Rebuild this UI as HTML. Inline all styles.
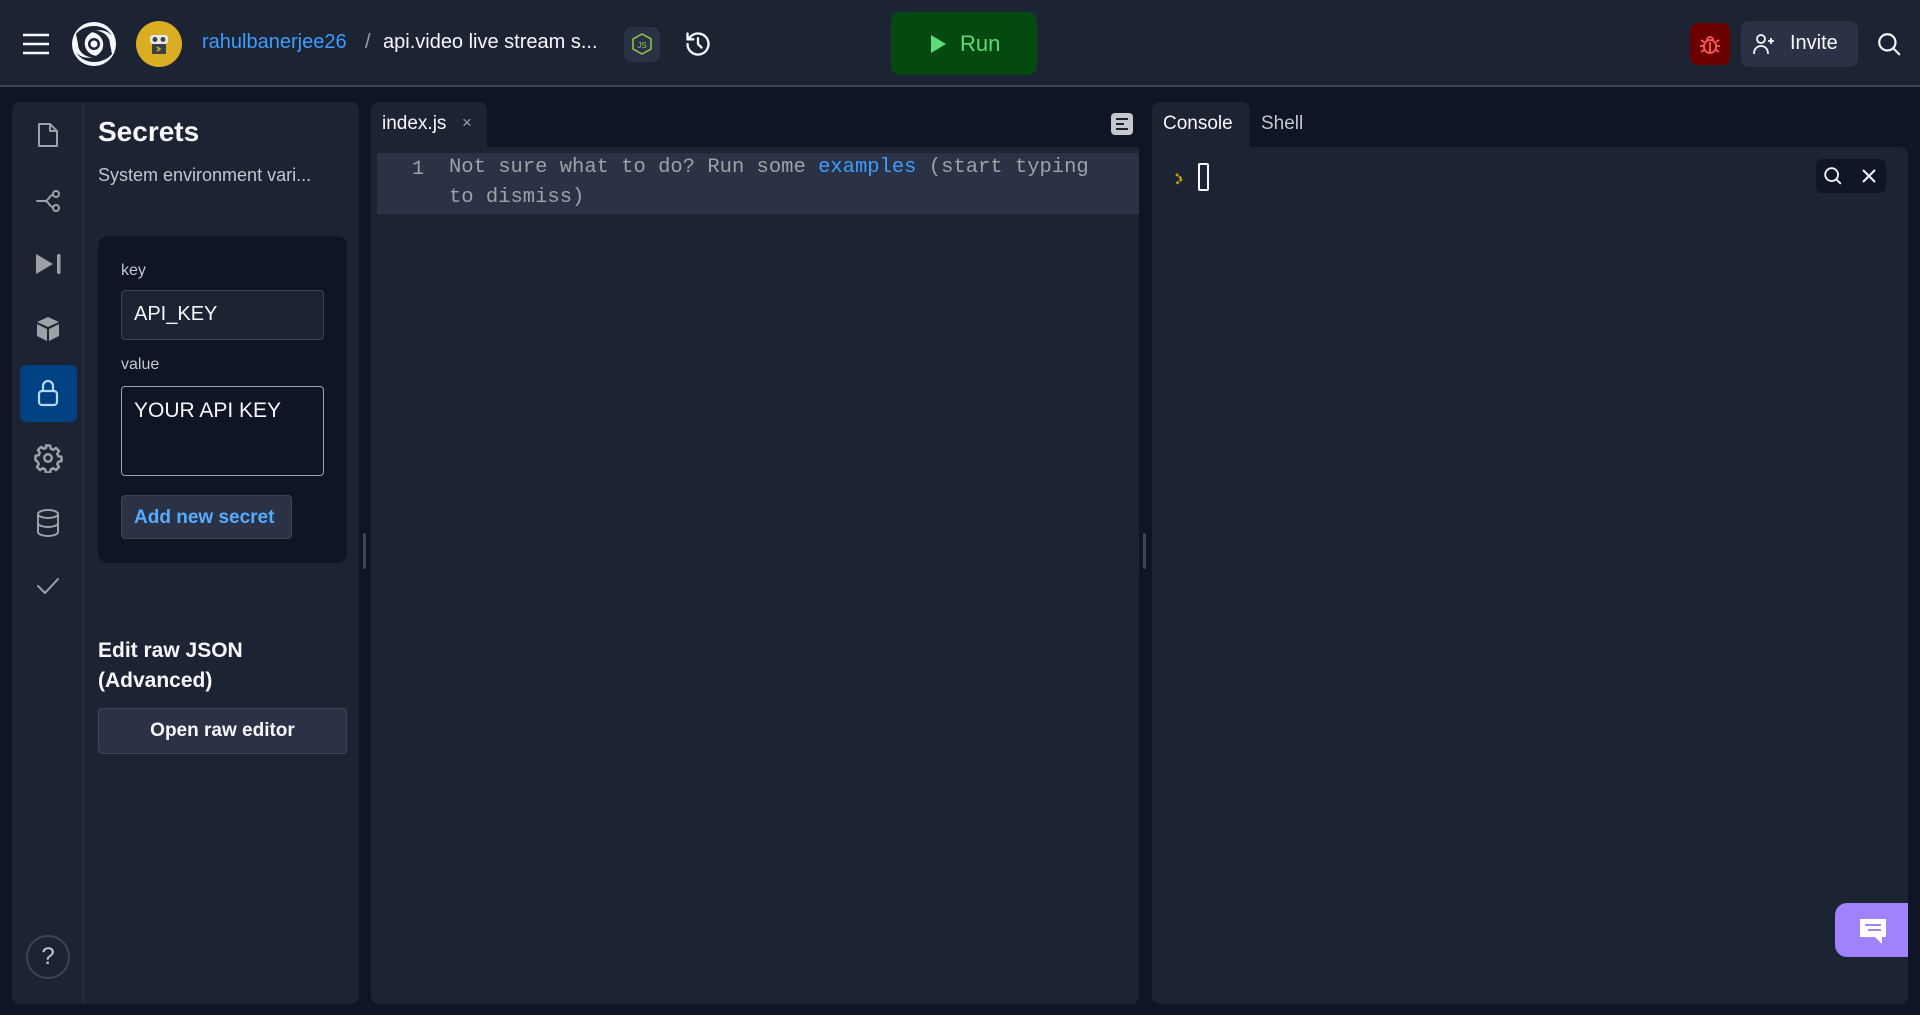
<!DOCTYPE html>
<html><head><meta charset="utf-8"><style>
*{box-sizing:border-box;margin:0;padding:0}
body{width:1920px;height:1015px;background:#0e1525;font-family:"Liberation Sans",sans-serif;color:#f5f9fc;position:relative;overflow:hidden}
.a{position:absolute}
.hdr{left:0;top:0;width:1920px;height:87px;background:#1c2333;border-bottom:2px solid #3c445c}
.panel{background:#1c2333;border-radius:8px}
svg{position:absolute}
.ic{stroke:#9da2a6;fill:none;stroke-width:2;stroke-linecap:round;stroke-linejoin:round}
.mono{font-family:"Liberation Mono",monospace}
</style></head><body>
<div class="a hdr"></div>
<!-- hamburger -->
<svg style="left:22px;top:32px" width="28" height="24"><path d="M1 3H27M1 12H27M1 21H27" stroke="#f5f9fc" stroke-width="2.6"/></svg>
<!-- logo -->
<svg style="left:70px;top:20px" width="48" height="48" viewBox="0 0 48 48"><circle cx="24" cy="24" r="22" fill="#f5f9fc"/><path d="M6 14C14 4 34 2 42 16C36 8 22 8 16 18C12 26 18 36 28 36C20 40 8 34 8 24Z" fill="#1c2333"/><path d="M42 34C34 44 14 46 6 32C12 40 26 40 32 30C36 22 30 12 20 12C28 8 40 14 40 24Z" fill="#1c2333"/><circle cx="24" cy="24" r="6" fill="#1c2333"/><circle cx="24" cy="24" r="3.5" fill="#f5f9fc"/></svg>
<!-- avatar -->
<div class="a" style="left:136px;top:21px;width:46px;height:46px;border-radius:50%;background:#d9ae22"></div>
<svg style="left:146px;top:31px" width="26" height="26"><rect x="4" y="4" width="18" height="9" rx="3" fill="#e8e8e8"/><circle cx="9" cy="8.5" r="2.5" fill="#444"/><circle cx="17" cy="8.5" r="2.5" fill="#444"/><rect x="6" y="13" width="14" height="10" fill="#3a3f4a"/><path d="M11 16L14 18L11 20" stroke="#d9ae22" fill="none" stroke-width="1.5"/></svg>
<div class="a" style="left:202px;top:31px;font-size:20px;color:#3c9dff;font-weight:500">rahulbanerjee26</div>
<div class="a" style="left:365px;top:31px;font-size:20px;color:#9da2a6">/</div>
<div class="a" style="left:383px;top:31px;font-size:20px;color:#f5f9fc">api.video live stream s...</div>
<div class="a" style="left:624px;top:27px;width:36px;height:35px;border-radius:8px;background:#2b3245"></div>
<svg style="left:632px;top:33px" width="20" height="22"><path d="M10 1L19 6V16L10 21L1 16V6Z" fill="none" stroke="#8cc84b" stroke-width="1.5"/><text x="10" y="15" font-size="8" fill="#8cc84b" text-anchor="middle" font-family="Liberation Sans">JS</text></svg>
<svg style="left:684px;top:30px" width="28" height="28" viewBox="0 0 24 24" class="ic" style="stroke:#f5f9fc"><path d="M3 12a9 9 0 1 0 3-6.7L3 8M3 3v5h5M12 7v5l3 3" stroke="#f5f9fc"/></svg>
<!-- run -->
<div class="a" style="left:891px;top:12px;width:146px;height:63px;border-radius:9px;background:#044a10"></div>
<svg style="left:929px;top:34px" width="18" height="20"><path d="M2 1L17 10L2 19Z" fill="#5fd97a"/></svg>
<div class="a" style="left:960px;top:31px;font-size:22px;color:#5fd97a;font-weight:500">Run</div>
<!-- bug -->
<div class="a" style="left:1690px;top:23px;width:40px;height:42px;border-radius:8px;background:#6b0000"></div>
<svg style="left:1698px;top:32px" width="24" height="24" viewBox="0 0 24 24" fill="none" stroke="#ff5959" stroke-width="1.8"><rect x="6" y="8" width="12" height="13" rx="6"/><path d="M9 8a3 3 0 0 1 6 0M12 10v11M2 14h4M18 14h4M3 8l3 2M21 8l-3 2M3 20l3-2M21 20l-3-2"/></svg>
<!-- invite -->
<div class="a" style="left:1741px;top:21px;width:117px;height:46px;border-radius:8px;background:#2b3245"></div>
<svg style="left:1752px;top:33px" width="24" height="22" viewBox="0 0 24 22" fill="none" stroke="#f5f9fc" stroke-width="1.8"><circle cx="9" cy="6" r="4"/><path d="M2 21c0-5 3-8 7-8s7 3 7 8M19 5v6M16 8h6"/></svg>
<div class="a" style="left:1790px;top:32px;font-size:20px">Invite</div>
<svg style="left:1876px;top:31px" width="26" height="26" viewBox="0 0 24 24" fill="none" stroke="#f5f9fc" stroke-width="2"><circle cx="10.5" cy="10.5" r="7.5"/><path d="M16 16l6 6"/></svg>

<!-- left panel -->
<div class="a panel" style="left:12px;top:102px;width:347px;height:902px"></div>
<div class="a" style="left:83px;top:102px;width:1px;height:902px;background:#2b3245"></div>
<svg style="left:36px;top:121px" width="24" height="28" viewBox="0 0 24 28" class="ic"><path d="M3 3h11l7 7v15H3Z M14 3v7h7"/></svg>
<svg style="left:36px;top:188px" width="26" height="26" viewBox="0 0 26 26" class="ic"><path d="M1 13H9M9 13c4 0 4-6 8-6M9 13c4 0 4 6 8 6"/><circle cx="20" cy="6" r="3"/><circle cx="20" cy="20" r="3"/></svg>
<svg style="left:35px;top:252px" width="28" height="24"><path d="M1 2L18 12L1 22Z" fill="#9da2a6"/><rect x="22" y="2" width="3.5" height="20" rx="1.5" fill="#9da2a6"/></svg>
<svg style="left:35px;top:315px" width="26" height="28" viewBox="0 0 26 28"><path d="M13 2L24 7L13 12L2 7Z M2 9L12 14V26L2 21Z M14 14L24 9V21L14 26Z" fill="#9da2a6"/></svg>
<div class="a" style="left:20px;top:365px;width:57px;height:57px;border-radius:6px;background:#004182"></div>
<svg style="left:36px;top:378px" width="24" height="30" viewBox="0 0 24 30" fill="none" stroke="#b5d8ff" stroke-width="2.2"><rect x="3" y="13" width="18" height="14" rx="3"/><path d="M7 13V8a5 5 0 0 1 10 0v5"/></svg>
<svg style="left:33px;top:443px" width="30" height="30" viewBox="0 0 24 24" class="ic" style="stroke-width:1.6"><circle cx="12" cy="12" r="3"/><path d="M10.3 2h3.4l.6 2.6 1.8.8 2.3-1.4 2.4 2.4-1.4 2.3.8 1.8 2.6.6v3.4l-2.6.6-.8 1.8 1.4 2.3-2.4 2.4-2.3-1.4-1.8.8-.6 2.6h-3.4l-.6-2.6-1.8-.8-2.3 1.4-2.4-2.4 1.4-2.3-.8-1.8L2 13.7v-3.4l2.6-.6.8-1.8L4 5.6 6.4 3.2l2.3 1.4 1.8-.8Z"/></svg>
<svg style="left:35px;top:508px" width="26" height="30" viewBox="0 0 26 30" class="ic"><ellipse cx="13" cy="6" rx="10" ry="4"/><path d="M3 6v18c0 2.2 4.5 4 10 4s10-1.8 10-4V6M3 15c0 2.2 4.5 4 10 4s10-1.8 10-4"/></svg>
<svg style="left:36px;top:576px" width="24" height="20" viewBox="0 0 24 20" class="ic"><path d="M2 10l7 7L22 3"/></svg>
<div class="a" style="left:26px;top:935px;width:44px;height:44px;border-radius:50%;border:2px solid #3c445c;text-align:center;line-height:40px;font-size:24px;color:#c2c8cc">?</div>

<div class="a" style="left:98px;top:116px;font-size:28px;font-weight:bold">Secrets</div>
<div class="a" style="left:98px;top:165px;font-size:18px;color:#c2c8cc">System environment vari...</div>
<div class="a" style="left:98px;top:236px;width:249px;height:327px;border-radius:10px;background:#0e1525"></div>
<div class="a" style="left:121px;top:262px;font-size:16px;color:#c2c8cc">key</div>
<div class="a" style="left:121px;top:290px;width:203px;height:50px;border-radius:4px;background:#1c2333;border:1px solid #3c445c;font-size:20px;padding:12px 12px">API_KEY</div>
<div class="a" style="left:121px;top:356px;font-size:16px;color:#c2c8cc">value</div>
<div class="a" style="left:121px;top:386px;width:203px;height:90px;border-radius:4px;background:#0e1525;border:1px solid #9da2a6;font-size:21px;padding:12px 12px">YOUR API KEY</div>
<div class="a" style="left:121px;top:495px;width:171px;height:44px;border-radius:4px;background:#2b3245;border:1px solid #3c445c;font-size:19px;font-weight:bold;color:#57abff;padding:11px 12px">Add new secret</div>
<div class="a" style="left:98px;top:636px;font-size:21px;font-weight:bold;line-height:30px">Edit raw JSON<br>(Advanced)</div>
<div class="a" style="left:98px;top:708px;width:249px;height:46px;border-radius:4px;background:#2b3245;border:1px solid #3c445c;font-size:19px;font-weight:bold;text-align:center;line-height:44px">Open raw editor</div>
<div class="a" style="left:363px;top:533px;width:3px;height:36px;border-radius:2px;background:#3c445c"></div>

<!-- editor -->
<div class="a panel" style="left:371px;top:102px;width:768px;height:902px"></div>
<div class="a" style="left:371px;top:102px;width:768px;height:45px;background:#0e1525"></div>
<div class="a" style="left:371px;top:102px;width:116px;height:45px;background:#1c2333;border-radius:8px 8px 0 0"></div>
<div class="a" style="left:382px;top:113px;font-size:19px">index.js</div>
<div class="a" style="left:462px;top:113px;font-size:17px;color:#9da2a6">×</div>
<svg style="left:1111px;top:113px" width="22" height="22"><rect x="0" y="0" width="22" height="22" rx="4" fill="#c2c8cc"/><path d="M5 6h12M5 11h8M5 16h12" stroke="#1c2333" stroke-width="2"/></svg>
<div class="a" style="left:377px;top:153px;width:762px;height:61px;background:#2b3245"></div>
<div class="a mono" style="left:412px;top:155px;font-size:20px;line-height:30px;color:#9da2a6">1</div>
<div class="a mono" style="left:449px;top:153px;font-size:20.5px;line-height:30px;color:#9da2a6;width:680px">Not sure what to do? Run some <span style="color:#3c9dff">examples</span> (start typing<br>to dismiss)</div>
<div class="a" style="left:1143px;top:533px;width:3px;height:36px;border-radius:2px;background:#3c445c"></div>

<!-- console -->
<div class="a" style="left:1152px;top:102px;width:98px;height:46px;background:#1c2333;border-radius:8px 8px 0 0"></div>
<div class="a" style="left:1163px;top:113px;font-size:19px">Console</div>
<div class="a" style="left:1261px;top:113px;font-size:19px;color:#c2c8cc">Shell</div>
<div class="a" style="left:1152px;top:147px;width:756px;height:857px;background:#1c2333;border-radius:0 8px 8px 8px"></div>
<svg style="left:1174px;top:172px" width="10" height="14"><path d="M2 2L8 7L2 12" stroke="#c4a000" stroke-width="2.5" fill="none" stroke-dasharray="3 1"/></svg>
<div class="a" style="left:1198px;top:163px;width:11px;height:28px;border:2px solid #f5f9fc;border-radius:2px"></div>
<div class="a" style="left:1816px;top:159px;width:70px;height:34px;border-radius:6px;background:#0e1525"></div>
<svg style="left:1822px;top:165px" width="22" height="22" viewBox="0 0 24 24" fill="none" stroke="#f5f9fc" stroke-width="2"><circle cx="10.5" cy="10.5" r="7"/><path d="M15.5 15.5l5 5"/></svg>
<svg style="left:1861px;top:168px" width="16" height="16"><path d="M2 2L14 14M14 2L2 14" stroke="#f5f9fc" stroke-width="2"/></svg>
<div class="a" style="left:1835px;top:903px;width:80px;height:54px;border-radius:12px 0 0 12px;background:#a082ff"></div>
<svg style="left:1858px;top:917px" width="30" height="28"><path d="M2 2H28V20H24V27L17 20H2Z" fill="#fff"/><path d="M7 8H23M10 13H23" stroke="#a082ff" stroke-width="2"/></svg>
<div class="a" style="left:1908px;top:102px;width:12px;height:913px;background:#0e1525"></div>
</body></html>
